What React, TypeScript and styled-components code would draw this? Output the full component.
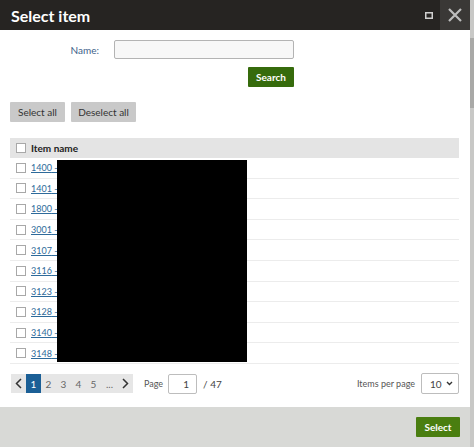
import React from "react";
import styled, { createGlobalStyle } from "styled-components";

const Global = createGlobalStyle`
  html, body { margin: 0; padding: 0; }
  body {
    width: 474px; height: 447px; overflow: hidden;
    font-family: Lato, "Open Sans", "Liberation Sans", sans-serif;
    background: #c9c9c7;
  }
  * { box-sizing: border-box; }
`;

const Page = styled.div`
  display: flex;
  width: 474px;
  height: 447px;
`;

const Dialog = styled.div`
  width: 470px;
  height: 447px;
  display: flex;
  flex-direction: column;
  background: #fff;
`;

const ScrollStrip = styled.div`
  width: 4px;
  height: 447px;
  background: #c8c8c6;
  display: flex;
  flex-direction: column;
  padding-top: 38px;
`;

const Thumb = styled.div`
  height: 70px;
  background: #a9a9a7;
`;

const TitleBar = styled.div`
  height: 30px;
  background: #262422;
  display: flex;
  align-items: center;
  padding-left: 11px;
`;

const Title = styled.div`
  color: #fff;
  font-family: Lato, "Open Sans", sans-serif;
  font-weight: 700;
  font-size: 16px;
  flex: 1;
`;

const IconButton = styled.div<{ $close?: boolean }>`
  width: ${(p) => (p.$close ? 30 : 22)}px;
  height: 30px;
  display: flex;
  align-items: center;
  justify-content: center;
  background: ${(p) => (p.$close ? "#3a3836" : "transparent")};
`;

const Content = styled.div`
  flex: 1;
  position: relative;
  padding: 10px 11px 0 10px;
  display: flex;
  flex-direction: column;
`;

const FormRow = styled.div`
  display: flex;
  align-items: center;
  height: 19px;
`;

const Label = styled.div`
  width: 89px;
  text-align: right;
  font-size: 10px;
  color: #3d6189;
`;

const TextInput = styled.div`
  margin-left: 15px;
  width: 180px;
  height: 19px;
  border: 1px solid #b3b3b3;
  background: #f7f7f7;
  border-radius: 2px;
`;

const ButtonRow = styled.div<{ $indent?: number; $mt: number }>`
  display: flex;
  gap: 6px;
  margin-top: ${(p) => p.$mt}px;
  padding-left: ${(p) => p.$indent ?? 0}px;
`;

const GreenButton = styled.div<{ $bg: string; $w: number }>`
  width: ${(p) => p.$w}px;
  height: 20px;
  background: ${(p) => p.$bg};
  color: #fff;
  font-weight: 700;
  font-size: 10px;
  display: flex;
  align-items: center;
  justify-content: center;
  border-radius: 1px;
`;

const GrayButton = styled.div<{ $w: number }>`
  width: ${(p) => p.$w}px;
  height: 20px;
  background: #c9c9c9;
  color: #333;
  font-size: 10px;
  display: flex;
  align-items: center;
  justify-content: center;
  border-radius: 1px;
`;

const Table = styled.div`
  margin-top: 16px;
  width: 449px;
  display: flex;
  flex-direction: column;
  position: relative;
`;

const HeaderRow = styled.div`
  height: 20px;
  background: #e4e4e4;
  display: flex;
  align-items: center;
  padding-left: 6px;
  font-weight: 700;
  font-size: 10px;
  color: #222;
`;

const Row = styled.div`
  height: 20.6px;
  display: flex;
  align-items: center;
  padding-left: 6px;
  border-bottom: 1px solid #ececec;
`;

const Check = styled.span`
  width: 10px;
  height: 10px;
  border: 1px solid #a8a8a8;
  background: #fff;
  margin-right: 5px;
  flex-shrink: 0;
`;

const Link = styled.a`
  color: #2e6a9a;
  font-size: 9px;
  text-decoration: underline;
`;

const Redaction = styled.div`
  position: absolute;
  left: 47px;
  top: 22px;
  width: 190px;
  height: 202px;
  background: #000;
`;

const Pager = styled.div`
  margin-top: 10px;
  display: flex;
  align-items: center;
  height: 20px;
  font-size: 9px;
  color: #555;
`;

const PageGroup = styled.div`
  display: flex;
  background: #e6e6e6;
  height: 19px;
  margin-left: 1px;
`;

const PageCell = styled.div<{ $active?: boolean; $w?: number }>`
  width: ${(p) => p.$w ?? 15}px;
  height: 19px;
  display: flex;
  align-items: center;
  justify-content: center;
  background: ${(p) => (p.$active ? "#1b5f96" : "transparent")};
  color: ${(p) => (p.$active ? "#fff" : "#666")};
  font-size: 10px;
`;

const PageLabel = styled.span`
  margin-left: 11px;
  color: #555;
`;

const PageInput = styled.div`
  margin-left: 5px;
  width: 29px;
  height: 20px;
  border: 1px solid #bdbdbd;
  border-radius: 2px;
  display: flex;
  align-items: center;
  justify-content: flex-end;
  padding-right: 7px;
  color: #444;
  font-size: 10px;
`;

const Total = styled.span`
  margin-left: 6px;
  color: #444;
  font-size: 10px;
`;

const Spacer = styled.div`
  flex: 1;
`;

const SelectBox = styled.div`
  margin-left: 6px;
  width: 38px;
  height: 21px;
  border: 1px solid #bdbdbd;
  border-radius: 2px;
  display: flex;
  align-items: center;
  justify-content: space-between;
  padding: 0 5px 0 8px;
  color: #444;
  font-size: 10px;
`;

const Footer = styled.div`
  height: 40px;
  background: #d8d9d6;
  display: flex;
  align-items: center;
  justify-content: flex-end;
  padding-right: 10px;
`;

const items = ["1400", "1401", "1800", "3001", "3107", "3116", "3123", "3128", "3140", "3148"];

export default function App() {
  return (
    <>
      <Global />
      <Page>
        <Dialog>
          <TitleBar>
            <Title>Select item</Title>
            <IconButton>
              <svg width="8" height="7" viewBox="0 0 8 7">
                <rect x="0.75" y="0.75" width="6.5" height="5.5" fill="none" stroke="#cfcfcf" strokeWidth="1.5" />
              </svg>
            </IconButton>
            <IconButton $close>
              <svg width="14" height="14" viewBox="0 0 14 14">
                <path d="M1 1 L13 13 M13 1 L1 13" stroke="#bdbdbd" strokeWidth="2.2" />
              </svg>
            </IconButton>
          </TitleBar>
          <Content>
            <FormRow>
              <Label>Name:</Label>
              <TextInput />
            </FormRow>
            <ButtonRow $indent={238} $mt={8}>
              <GreenButton $bg="#366b0c" $w={46}>Search</GreenButton>
            </ButtonRow>
            <ButtonRow $mt={15}>
              <GrayButton $w={55}>Select all</GrayButton>
              <GrayButton $w={65}>Deselect all</GrayButton>
            </ButtonRow>
            <Table>
              <HeaderRow>
                <Check />
                Item name
              </HeaderRow>
              {items.map((n) => (
                <Row key={n}>
                  <Check />
                  <Link>{n} -</Link>
                </Row>
              ))}
              <Redaction />
            </Table>
            <Pager>
              <PageGroup>
                <PageCell>
                  <svg width="7" height="11" viewBox="0 0 7 11">
                    <path d="M6 1 L1.5 5.5 L6 10" fill="none" stroke="#333" strokeWidth="1.5" />
                  </svg>
                </PageCell>
                <PageCell $active>1</PageCell>
                <PageCell>2</PageCell>
                <PageCell>3</PageCell>
                <PageCell>4</PageCell>
                <PageCell>5</PageCell>
                <PageCell $w={17}>...</PageCell>
                <PageCell>
                  <svg width="7" height="11" viewBox="0 0 7 11">
                    <path d="M1 1 L5.5 5.5 L1 10" fill="none" stroke="#333" strokeWidth="1.5" />
                  </svg>
                </PageCell>
              </PageGroup>
              <PageLabel>Page</PageLabel>
              <PageInput>1</PageInput>
              <Total>/ 47</Total>
              <Spacer />
              <span>Items per page</span>
              <SelectBox>
                10
                <svg width="7" height="5" viewBox="0 0 7 5">
                  <path d="M1 1 L3.5 3.5 L6 1" fill="none" stroke="#333" strokeWidth="1.4" />
                </svg>
              </SelectBox>
            </Pager>
            <Spacer />
          </Content>
          <Footer>
            <GreenButton $bg="#4a7e10" $w={44}>Select</GreenButton>
          </Footer>
        </Dialog>
        <ScrollStrip>
          <Thumb />
        </ScrollStrip>
      </Page>
    </>
  );
}
